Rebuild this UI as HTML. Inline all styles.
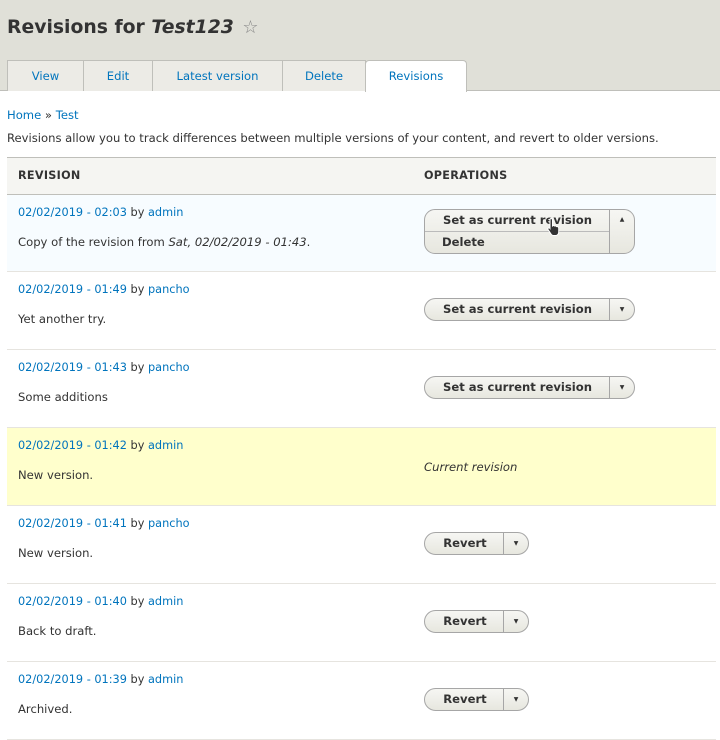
<!DOCTYPE html>
<html><head><meta charset="utf-8"><style>
*{box-sizing:border-box;margin:0;padding:0}
body{width:720px;height:728px;overflow:hidden;background:#fff;font-family:"DejaVu Sans","Liberation Sans",sans-serif;font-size:11.6px;color:#333;position:relative}
a{color:#0074bd;text-decoration:none}
.hdr{position:absolute;left:0;top:0;width:720px;height:91px;background:#e0e0d8;border-bottom:1px solid #bfbfba}
h1{position:absolute;left:7px;top:17px;font-size:18.8px;font-weight:bold;color:#333;white-space:nowrap}
h1 i{font-style:italic}
.star{color:#888;font-weight:normal;font-size:18px;margin-left:2px}
.tab{position:absolute;top:60px;height:31px;background:#ecebe6;border:1px solid #bfbfba;border-bottom:none;text-align:center;line-height:30px;color:#0074bd}
.tab.act{background:#fff;height:32px;border-radius:4px 4px 0 0}
.bc{position:absolute;left:7px;top:108px}
.desc{position:absolute;left:7px;top:131px;white-space:nowrap}
.th{position:absolute;left:7px;top:157px;width:709px;height:38px;background:#f5f5f2;border-top:1px solid #bfbfba;border-bottom:1px solid #bfbfba;font-weight:bold;font-size:11.2px;letter-spacing:.3px}
.th span{position:absolute;top:11px}
.row{position:absolute;left:7px;width:709px;height:78px;border-bottom:1px solid #e6e4df}
.row .d{position:absolute;left:11px;top:11px;white-space:nowrap;font-size:11.3px}
.row .m{position:absolute;left:11px;top:40px;white-space:nowrap}
.btn{position:absolute;left:417px;height:23px;border:1px solid #a6a6a6;border-radius:12px;background:linear-gradient(#f6f6f3,#e7e7df);font-weight:bold;color:#333;line-height:21px;font-size:11.6px}
.btn .l{position:absolute;left:0;top:0;bottom:0;text-align:center}
.btn .r{position:absolute;right:0;top:0;bottom:0;width:25px;border-left:1px solid #a6a6a6;text-align:center;font-size:6px;color:#333}
</style></head><body>
<div class="hdr"></div>
<h1>Revisions for <i>Test123</i> <span class="star">☆</span></h1>
<div class="tab" style="left:7px;width:77px">View</div>
<div class="tab" style="left:83px;width:70px">Edit</div>
<div class="tab" style="left:152px;width:131px">Latest version</div>
<div class="tab" style="left:282px;width:84px">Delete</div>
<div class="tab act" style="left:365px;width:102px">Revisions</div>
<div class="bc"><a>Home</a> » <a>Test</a></div>
<div class="desc">Revisions allow you to track differences between multiple versions of your content, and revert to older versions.</div>
<div class="th"><span style="left:11px">REVISION</span><span style="left:417px">OPERATIONS</span></div>

<div class="row" style="top:195px;height:77px;background:#f7fcff"><div class="d"><a>02/02/2019 - 02:03</a> by <a>admin</a></div><div class="m">Copy of the revision from <i>Sat, 02/02/2019 - 01:43</i>.</div>
<div class="btn" style="top:14px;width:211px;height:45px;border-radius:11px"><div class="l" style="width:185px;height:22px;line-height:20px;border-bottom:1px solid #bbb">Set as current revision</div><div class="l" style="top:22px;width:185px;text-align:left;padding-left:17px;line-height:20px">Delete</div><div class="r" style="line-height:20px">▲</div></div>
<svg style="position:absolute;left:540px;top:22px" width="16" height="20" viewBox="0 0 16 20"><path d="M4 1.5c.8 0 1.5.6 1.5 1.4V9l.5-.4c.8-.3 1.5 0 1.8.5.6-.3 1.4-.1 1.7.5.7-.3 1.5 0 1.8.7l.4.5V15c0 1.6-1 3-2.5 3.5H6.2c-.8 0-1.5-.5-2-1.2L1 12.5c-.4-.7 0-1.5.7-1.6.5 0 1 .2 1.3.6V2.9C3 2.1 3.3 1.5 4 1.5z" fill="#333" stroke="#fff" stroke-width="1"/></svg>
</div>
<div class="row" style="top:272px"><div class="d"><a>02/02/2019 - 01:49</a> by <a>pancho</a></div><div class="m">Yet another try.</div><div class="btn" style="top:26px;width:211px"><div class="l" style="width:185px">Set as current revision</div><div class="r">▼</div></div></div>
<div class="row" style="top:350px"><div class="d"><a>02/02/2019 - 01:43</a> by <a>pancho</a></div><div class="m">Some additions</div><div class="btn" style="top:26px;width:211px"><div class="l" style="width:185px">Set as current revision</div><div class="r">▼</div></div></div>
<div class="row" style="top:428px;background:#ffffcc"><div class="d"><a>02/02/2019 - 01:42</a> by <a>admin</a></div><div class="m">New version.</div><div style="position:absolute;left:417px;top:32px;font-style:italic">Current revision</div></div>
<div class="row" style="top:506px"><div class="d"><a>02/02/2019 - 01:41</a> by <a>pancho</a></div><div class="m">New version.</div><div class="btn" style="top:26px;width:105px"><div class="l" style="width:80px">Revert</div><div class="r">▼</div></div></div>
<div class="row" style="top:584px"><div class="d"><a>02/02/2019 - 01:40</a> by <a>admin</a></div><div class="m">Back to draft.</div><div class="btn" style="top:26px;width:105px"><div class="l" style="width:80px">Revert</div><div class="r">▼</div></div></div>
<div class="row" style="top:662px"><div class="d"><a>02/02/2019 - 01:39</a> by <a>admin</a></div><div class="m">Archived.</div><div class="btn" style="top:26px;width:105px"><div class="l" style="width:80px">Revert</div><div class="r">▼</div></div></div>
</body></html>
